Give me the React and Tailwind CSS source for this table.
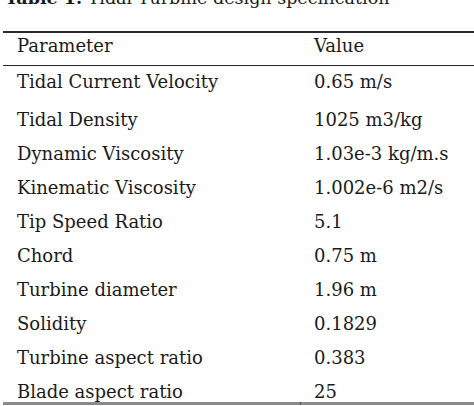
import React from "react";

const rows = [
  ["Tidal Current Velocity", "0.65 m/s"],
  ["Tidal Density", "1025 m3/kg"],
  ["Dynamic Viscosity", "1.03e-3 kg/m.s"],
  ["Kinematic Viscosity", "1.002e-6 m2/s"],
  ["Tip Speed Ratio", "5.1"],
  ["Chord", "0.75 m"],
  ["Turbine diameter", "1.96 m"],
  ["Solidity", "0.1829"],
  ["Turbine aspect ratio", "0.383"],
  ["Blade aspect ratio", "25"],
];

const App = () => {
  return (
    <div className="w-[474px] h-[406px] overflow-hidden bg-white text-[#1a1a1a] font-['DejaVu_Serif',serif] text-[18px] leading-[28px]">
      <div className="-mt-[16px] pl-[5px] whitespace-nowrap text-[17.5px]">
        <span className="font-bold">Table 1.</span> Tidal Turbine design specification
      </div>

      <div className="mt-[19px] ml-[3px] border-t-2 border-[#2a2a2a]">
        <div className="grid grid-cols-[311px_1fr] h-[33px] border-b-[1.5px] border-[#2a2a2a]">
          <div className="pl-[14px] -mt-[1px]">Parameter</div>
          <div className="-mt-[1px]">Value</div>
        </div>

        {rows.map(([name, value], i) => (
          <div
            key={i}
            className={`grid grid-cols-[311px_1fr] ${
              i === 0 ? "h-[38px]" : i === rows.length - 1 ? "h-[26px]" : "h-[34px]"
            }`}
          >
            <div className="pl-[14px] mt-[2px]">{name}</div>
            <div className="mt-[2px]">{value}</div>
          </div>
        ))}

        <div className="relative border-t-[3px] border-[#8a8a8a]">
          <div className="absolute left-[297px] -top-[3px] w-px h-[3px] bg-[#555]" />
        </div>
      </div>
    </div>
  );
};

export default App;
